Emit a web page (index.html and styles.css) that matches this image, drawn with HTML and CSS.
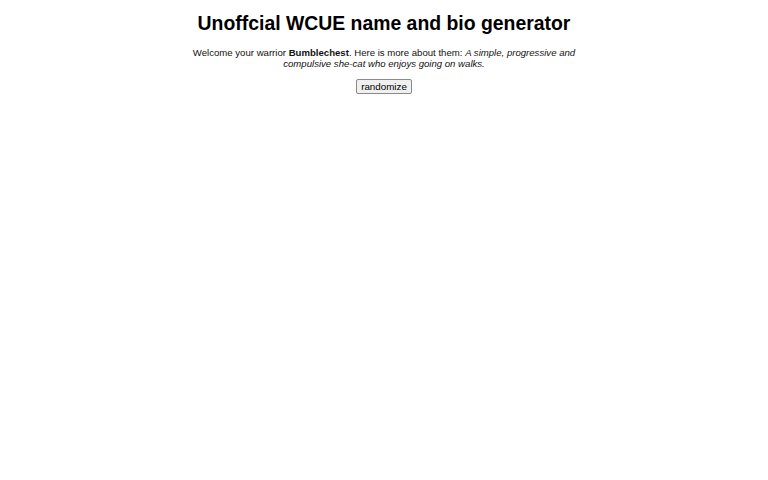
FILE: index.html
```html
<!DOCTYPE html>
<html>
<head>
<meta charset="utf-8">
<link rel="stylesheet" href="styles.css">
</head>
<body>
<main class="page">
  <h1 class="title">Unoffcial WCUE name and bio generator</h1>
  <p class="bio">Welcome your warrior <b>Bumblechest</b>. Here is more about them: <i>A simple, progressive and compulsive she-cat who enjoys going on walks.</i></p>
  <button class="btn">randomize</button>
</main>
</body>
</html>
```
FILE: styles.css
```css
body {
  margin: 8px;
  font-family: "Liberation Sans", Arial, sans-serif;
  color: #000;
  background: #fff;
}
.page {
  display: flex;
  flex-direction: column;
  align-items: center;
  text-align: center;
}
.title {
  font-size: 19.4px;
  font-weight: bold;
  margin: 4px 0 0;
  line-height: 22px;
}
.bio {
  font-size: 9.6px;
  line-height: 11px;
  max-width: 384px;
  margin: 12.5px 0 0;
  color: #111;
}
.btn {
  margin-top: 10.5px;
  font-family: "Liberation Sans", Arial, sans-serif;
  font-size: 9.8px;
  line-height: 11px;
  padding: 1px 4px;
  background: #f0f0f0;
  border: 1px solid #8a8a8a;
  border-radius: 2px;
  color: #000;
}
```
